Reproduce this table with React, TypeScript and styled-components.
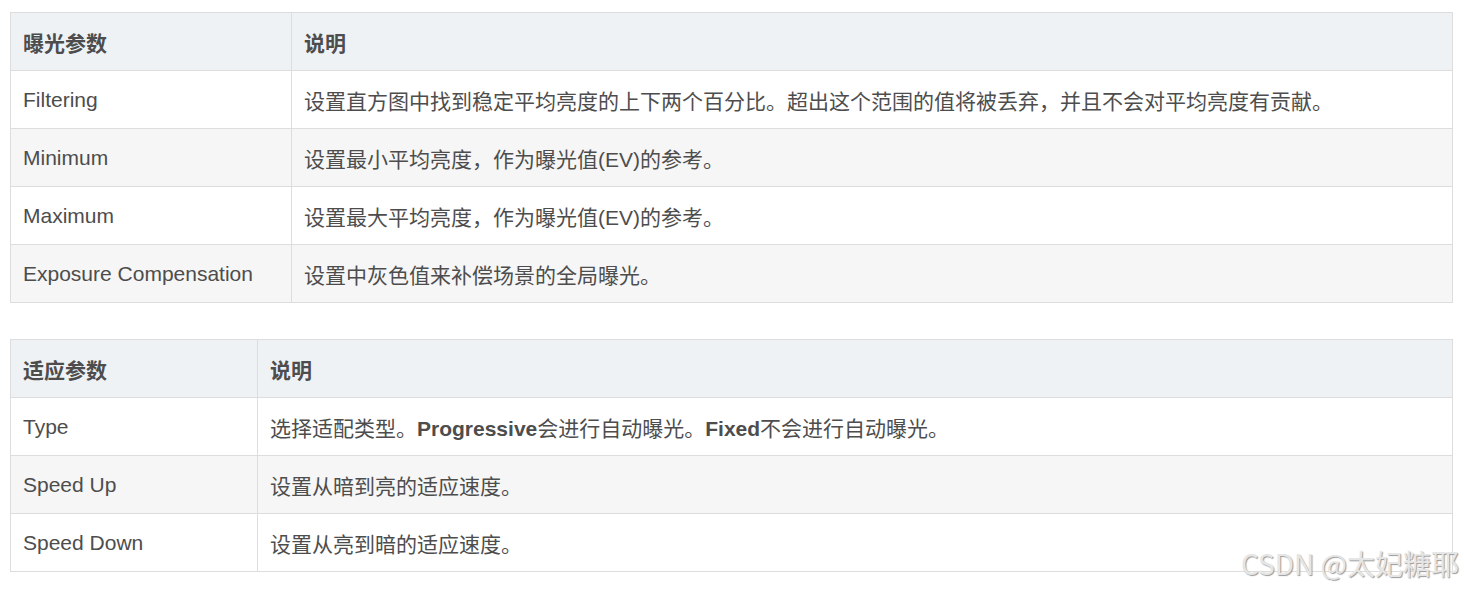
import styled, { createGlobalStyle } from "styled-components";

const GlobalStyle = createGlobalStyle`
   html, body {
      margin: 0;
      padding: 0;
      background: #fff;
   }
   body {
      font-family: "Liberation Sans", Arial, "Noto Sans CJK SC", sans-serif;
      color: #4d4d4d;
   }
`;

interface Row {
   name: string;
   desc: React.ReactNode;
}

const exposureRows: Row[] = [
   {
      name: "Filtering",
      desc: "设置直方图中找到稳定平均亮度的上下两个百分比。超出这个范围的值将被丢弃，并且不会对平均亮度有贡献。",
   },
   { name: "Minimum", desc: "设置最小平均亮度，作为曝光值(EV)的参考。" },
   { name: "Maximum", desc: "设置最大平均亮度，作为曝光值(EV)的参考。" },
   { name: "Exposure Compensation", desc: "设置中灰色值来补偿场景的全局曝光。" },
];

const adaptRows: Row[] = [
   {
      name: "Type",
      desc: (
         <>
            选择适配类型。<strong>Progressive</strong>会进行自动曝光。
            <strong>Fixed</strong>不会进行自动曝光。
         </>
      ),
   },
   { name: "Speed Up", desc: "设置从暗到亮的适应速度。" },
   { name: "Speed Down", desc: "设置从亮到暗的适应速度。" },
];

function ParamTable({
   title,
   firstCol,
   rows,
}: {
   title: string;
   firstCol: number;
   rows: Row[];
}) {
   return (
      <Table>
         <colgroup>
            <col style={{ width: firstCol }} />
            <col />
         </colgroup>
         <thead>
            <tr>
               <Th>{title}</Th>
               <Th>说明</Th>
            </tr>
         </thead>
         <tbody>
            {rows.map((r, i) => (
               <Tr key={r.name} $even={i % 2 === 1}>
                  <Td>{r.name}</Td>
                  <Td>{r.desc}</Td>
               </Tr>
            ))}
         </tbody>
      </Table>
   );
}

function App() {
   return (
      <Page>
         <GlobalStyle />
         <ParamTable title="曝光参数" firstCol={281} rows={exposureRows} />
         <ParamTable title="适应参数" firstCol={247} rows={adaptRows} />
         <Watermark>CSDN @太妃糖耶</Watermark>
      </Page>
   );
}

export default App;

const Page = styled.div`
   position: relative;
   width: 1464px;
   height: 589px;
   overflow: hidden;
   padding: 12px 0 0 10px;
   box-sizing: border-box;
   display: flex;
   flex-direction: column;
   gap: 36px;
`;

const Table = styled.table`
   width: 1443px;
   border-collapse: collapse;
   table-layout: fixed;
   font-size: 21px;
`;

const Th = styled.th`
   height: 58px;
   padding: 0 12px;
   text-align: left;
   font-weight: bold;
   background: #eff2f5;
   border: 1px solid #dddddd;
   box-sizing: border-box;
`;

const Tr = styled.tr<{ $even: boolean }>`
   background: ${(p) => (p.$even ? "#f6f6f6" : "#ffffff")};
`;

const Td = styled.td`
   height: 58px;
   padding: 0 12px;
   border: 1px solid #dddddd;
   box-sizing: border-box;
   white-space: nowrap;
   strong {
      font-weight: bold;
   }
`;

const Watermark = styled.div`
   position: absolute;
   left: 1241px;
   top: 549px;
   font-size: 28px;
   line-height: 28px;
   white-space: nowrap;
   color: #e6e6e6;
   text-shadow: 1px 1px 1px #9a9a9a;
   font-family: "Noto Sans CJK SC", sans-serif;
`;
